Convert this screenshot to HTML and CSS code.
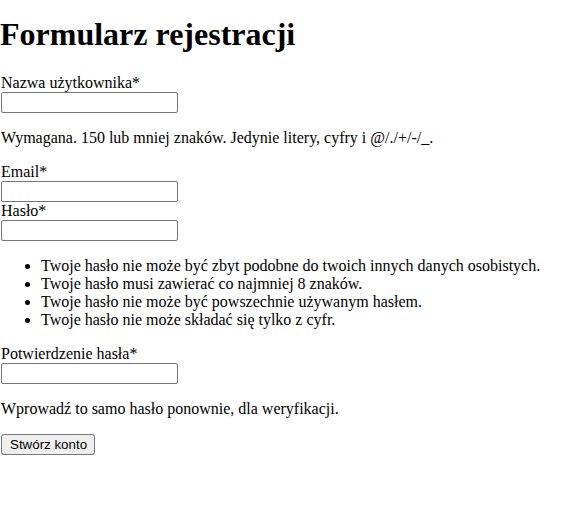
FILE: index.html
```html
<!DOCTYPE html>
<html lang="pl">
<head>
<meta charset="utf-8">
<title>Formularz rejestracji</title>
<link rel="stylesheet" href="styles.css">
</head>
<body>
<h1 class="title">Formularz rejestracji</h1>
<form class="form">
  <label class="label" for="u">Nazwa użytkownika*</label><br>
  <input class="field" type="text" id="u">
  <p class="help">Wymagana. 150 lub mniej znaków. Jedynie litery, cyfry i @/./+/-/_.</p>
  <label class="label" for="e">Email*</label><br>
  <input class="field" type="email" id="e"><br>
  <label class="label" for="p1">Hasło*</label><br>
  <input class="field" type="password" id="p1">
  <ul class="rules">
    <li>Twoje hasło nie może być zbyt podobne do twoich innych danych osobistych.</li>
    <li>Twoje hasło musi zawierać co najmniej 8 znaków.</li>
    <li>Twoje hasło nie może być powszechnie używanym hasłem.</li>
    <li>Twoje hasło nie może składać się tylko z cyfr.</li>
  </ul>
  <label class="label" for="p2">Potwierdzenie hasła*</label><br>
  <input class="field" type="password" id="p2">
  <p class="help">Wprowadź to samo hasło ponownie, dla weryfikacji.</p>
  <button class="submit" type="button">Stwórz konto</button>
</form>
</body>
</html>
```
FILE: styles.css
```css
html, body {
  background: #fff;
}
body {
  margin: 0;
  padding: 0 0 0 1px;
  font-family: "Liberation Serif", "Times New Roman", serif;
  font-size: 16px;
  color: #000;
}
.title {
  font-size: 32px;
  font-weight: bold;
  margin: 16px 0 21px -1px;
}
.form {
  margin: 0;
}
.field {
  box-sizing: border-box;
  width: 177px;
  height: 21px;
  margin: 0;
  padding: 1px 2px;
  border: 1px solid #767676;
  border-radius: 2px;
  font-family: "Liberation Sans", Arial, sans-serif;
  font-size: 13.33px;
  background: #fff;
  vertical-align: top;
}
.help {
  margin: 16px 0;
}
.rules {
  margin: 16px 0;
  padding-left: 40px;
}
.submit {
  box-sizing: border-box;
  height: 21px;
  margin: 0;
  padding: 1px 7px 1px 8px;
  border: 1px solid #767676;
  border-radius: 3px;
  background: #efefef;
  font-family: "Liberation Sans", Arial, sans-serif;
  font-size: 13.33px;
  color: #000;
}
```
